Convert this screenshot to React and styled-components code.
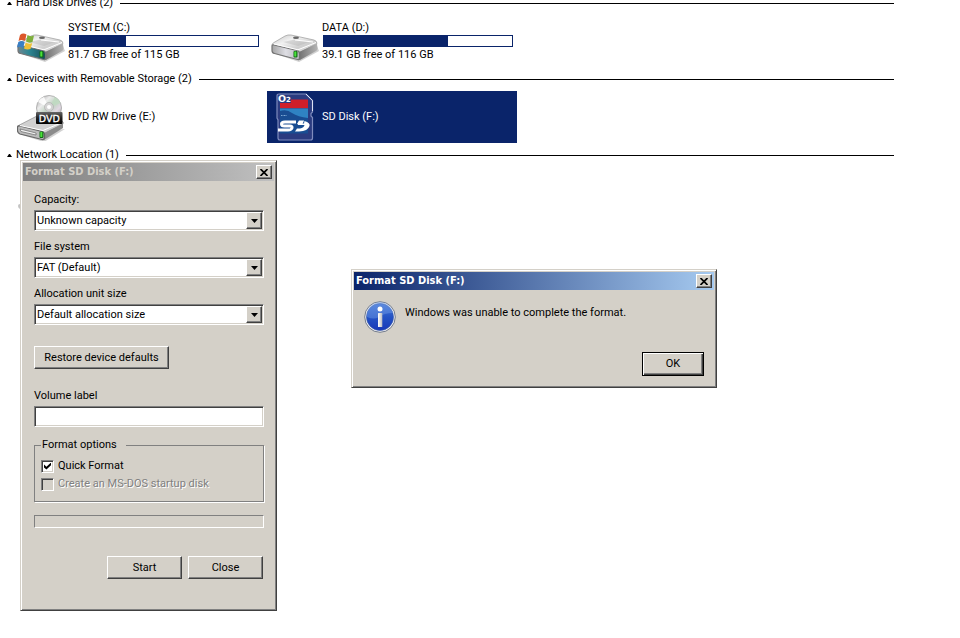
import { useState } from "react";
import styled, { createGlobalStyle, css } from "styled-components";

const GlobalStyle = createGlobalStyle`
  * {
    box-sizing: border-box;
  }

  body {
    margin: 0;
    background: #fff;
  }

  body,
  button,
  input,
  select {
    font-family: Roboto, Tahoma, sans-serif;
    font-size: 11px;
    line-height: 14px;
    color: #000;
  }
`;

const raised = css`
  border: 1px solid;
  border-color: #fff #404040 #404040 #fff;
  box-shadow: inset -1px -1px 0 #808080;
`;

const sunken = css`
  border: 1px solid;
  border-color: #808080 #fff #fff #808080;
  box-shadow:
    inset 1px 1px 0 #404040,
    inset -1px -1px 0 #d4d0c8;
`;

const Desktop = styled.div`
  position: relative;
  min-height: 100vh;
  overflow: hidden;
`;

const Explorer = styled.main`
  margin: -4px 66px 0 7px;
`;

const Section = styled.section`
  display: flex;
  flex-direction: column;
  gap: 5px;
  margin-bottom: 5px;
`;

const SectionHeader = styled.h2`
  display: flex;
  align-items: center;
  gap: 4px;
  margin: 0;
  font-size: 11px;
  font-weight: normal;
  line-height: 14px;
  white-space: nowrap;

  &::after {
    content: "";
    flex: 1;
    height: 1px;
    margin-left: 3px;
    background: #000;
  }
`;

const Items = styled.div`
  display: flex;
  gap: 4px;
  padding-left: 6px;
`;

const Item = styled.div`
  display: flex;
  align-items: center;
  gap: 3px;
  width: 250px;
  height: 52px;
  padding-left: 4px;
  color: ${(props) => (props.$selected ? "#fff" : "#000")};
  background: ${(props) => (props.$selected ? "#0a246a" : "transparent")};
`;

const Details = styled.div`
  display: flex;
  flex-direction: column;
  gap: 1px;
  line-height: 13px;
`;

const UsageBar = styled.div`
  width: 190px;
  height: 12px;
  margin-left: 1px;
  border: 1px solid #0a246a;
`;

const UsageFill = styled.div`
  height: 100%;
  background: #0a246a;
`;

const Window = styled.div`
  position: absolute;
  left: ${(props) => props.$left}px;
  top: ${(props) => props.$top}px;
  width: ${(props) => props.$width}px;
  padding: 2px;
  background: #d4d0c8;
  border: 1px solid;
  border-color: #d4d0c8 #404040 #404040 #d4d0c8;
  box-shadow:
    inset 1px 1px 0 #fff,
    inset -1px -1px 0 #808080;
`;

const TitleBar = styled.div`
  display: flex;
  align-items: center;
  justify-content: space-between;
  height: 18px;
  padding: 0 2px;
  font-family: "DejaVu Sans Condensed", "DejaVu Sans", Tahoma, sans-serif;
  font-weight: bold;
  color: ${(props) => (props.$active ? "#fff" : "#d4d0c8")};
  background: ${(props) =>
    props.$active
      ? "linear-gradient(to right, #0a246a, #a6caf0)"
      : "linear-gradient(to right, #808080, #c0c0c0)"};
`;

const CloseButton = styled.button`
  ${raised}
  display: flex;
  align-items: center;
  justify-content: center;
  width: 16px;
  height: 14px;
  padding: 0;
  background: #d4d0c8;
`;

const Button = styled.button`
  ${raised}
  min-width: 75px;
  height: 23px;
  padding: 0 8px;
  background: #d4d0c8;
`;

const WideButton = styled(Button)`
  width: 135px;
  margin-bottom: 20px;
`;

const DefaultButton = styled(Button)`
  min-width: 62px;
  height: 24px;
  border-color: #000;
  box-shadow:
    inset 1px 1px 0 #fff,
    inset -1px -1px 0 #404040,
    inset -2px -2px 0 #808080;
`;

const FormatForm = styled.form`
  display: flex;
  flex-direction: column;
  align-items: flex-start;
  padding: 12px 10px 29px 11px;
`;

const Field = styled.div`
  display: flex;
  flex-direction: column;
  gap: 3px;
  width: 100%;
  margin-bottom: ${(props) => props.$space}px;
`;

const SelectBox = styled.div`
  ${sunken}
  position: relative;
  height: 21px;
  padding: 1px;
  background: #fff;
`;

const Select = styled.select`
  appearance: none;
  display: block;
  width: 100%;
  height: 17px;
  padding: 0 18px 0 1px;
  border: 0;
  outline: 0;
  background: transparent;
`;

const SelectArrow = styled.span`
  ${raised}
  position: absolute;
  top: 1px;
  right: 1px;
  display: flex;
  align-items: center;
  justify-content: center;
  width: 16px;
  height: 17px;
  background: #d4d0c8;
  pointer-events: none;
`;

const TextInput = styled.input`
  ${sunken}
  width: 100%;
  height: 21px;
  padding: 2px 3px;
  outline: 0;
  background: #fff;
`;

const Options = styled.fieldset`
  display: flex;
  flex-direction: column;
  gap: 4px;
  width: 100%;
  margin: 0 0 13px;
  padding: 7px 6px 10px;
  border: 1px solid #808080;
  box-shadow: 1px 1px 0 #fff;
`;

const Legend = styled.legend`
  padding: 0 9px 0 1px;
`;

const CheckLabel = styled.label`
  display: flex;
  align-items: center;
  gap: 4px;
  color: ${(props) => (props.$disabled ? "#808080" : "#000")};
  text-shadow: ${(props) => (props.$disabled ? "1px 1px 0 #fff" : "none")};
`;

const CheckBox = styled.input`
  ${sunken}
  appearance: none;
  display: grid;
  place-items: center;
  width: 13px;
  height: 13px;
  margin: 0;
  background: #fff;

  &:disabled {
    background: #d4d0c8;
  }

  &:checked::after {
    content: "";
    width: 7px;
    height: 7px;
    background: #000;
    clip-path: polygon(0 30%, 35% 60%, 100% 0, 100% 40%, 35% 100%, 0 70%);
  }
`;

const Progress = styled.div`
  width: 100%;
  height: 13px;
  margin-bottom: 28px;
  border: 1px solid;
  border-color: #808080 #fff #fff #808080;
`;

const Actions = styled.div`
  display: flex;
  gap: 6px;
  align-self: flex-end;
  padding-right: 1px;
`;

const MessageBody = styled.div`
  display: flex;
  gap: 9px;
  padding: 11px 10px 0;
`;

const MessageText = styled.p`
  margin: 0;
  padding-top: 5px;
`;

const MessageActions = styled.div`
  display: flex;
  justify-content: flex-end;
  padding: 19px 10px 9px;
`;

function CloseIcon() {
  return (
    <svg width="8" height="7" viewBox="0 0 8 7" aria-hidden="true">
      <path d="M0.5 0 L7.5 7 M7.5 0 L0.5 7" stroke="#000" strokeWidth="1.7" />
    </svg>
  );
}

function HardDriveIcon({ system }) {
  return (
    <svg width="48" height="48" viewBox="0 0 48 48" aria-hidden="true">
      <defs>
        <linearGradient id="driveTop" x1="0" y1="0" x2="1" y2="1">
          <stop offset="0" stopColor="#c2c2c2" />
          <stop offset=".35" stopColor="#f2f2f2" />
          <stop offset=".65" stopColor="#cfcfcf" />
          <stop offset="1" stopColor="#e6e6e6" />
        </linearGradient>
        <linearGradient id="driveSide" x1="0" y1="0" x2="1" y2="0">
          <stop offset="0" stopColor="#6f6f6f" />
          <stop offset="1" stopColor="#b4b4b4" />
        </linearGradient>
        <linearGradient id="driveFront" x1="0" y1="0" x2="1" y2="0">
          <stop offset="0" stopColor="#a5a5a5" />
          <stop offset=".5" stopColor="#dedee4" />
          <stop offset="1" stopColor="#b9b9bd" />
        </linearGradient>
        <linearGradient id="driveTeal" x1="0" y1="0" x2="1" y2="0">
          <stop offset="0" stopColor="#6e8590" />
          <stop offset=".4" stopColor="#2d8793" />
          <stop offset="1" stopColor="#174b58" />
        </linearGradient>
      </defs>
      <path d="M2 36 L28 45 L48 34 L46 29 L28 39Z" fill="#666" opacity=".3" />
      <path
        d="M1 28 Q1 26.500 3 25.500 L14 19 Q17 17.500 20 18 L43 23 Q46 24 46 26.500 L29 35.500 L3 29.500Z"
        fill="url(#driveTop)"
        stroke="#9a9a9a"
        strokeWidth=".7"
      />
      <path
        d="M28 35 L46 26.500 L46.500 31.500 Q46.500 33 45 34 L29 43 L27.500 42.500Z"
        fill="url(#driveSide)"
      />
      <path
        d="M1 29 Q1 27.500 3 28 L26 33.500 Q28.500 34 28.500 37 L28.500 40.500 Q28.500 43 26.500 42.500 L3.500 36.500 Q1 36 1 33.500Z"
        fill={system ? "url(#driveTeal)" : "url(#driveFront)"}
        stroke="#747474"
        strokeWidth="1.200"
      />
      <path d="M3 27 L27 32.800 L45 25.500" fill="none" stroke="#fff" strokeWidth="1" />
      <path d="M12 25 L24 22.500 L38 25 L27 29Z" fill="#aaa" opacity=".35" />
      <path d="M24 23 L42 25" stroke="#fff" strokeWidth="1" />
      <ellipse cx="25" cy="20.800" rx="3" ry="1.200" fill="#686868" />
      <rect x="22.500" y="34" width="4" height="6.500" rx="1" fill="#126b16" />
      <rect x="23.300" y="34.500" width="2" height="5" rx=".5" fill="#4be339" />
      {system && (
        <g>
          <path d="M3 18 Q6 15.500 9.500 17.500 L8 24 Q5 22 1.500 24Z" fill="#dc572a" />
          <path d="M10.500 18 Q13.500 20 17 18.500 L15.500 25 Q12 26.500 9 24.500Z" fill="#7eaf3c" />
          <path d="M1.300 25 Q4.500 23 7.700 25 L6 31 Q3 29 0 30.500Z" fill="#397fc5" />
          <path d="M8.700 25.500 Q12 27.500 15.300 26 L13.500 32 Q10 33 7 31.500Z" fill="#efc038" />
        </g>
      )}
    </svg>
  );
}

function DvdDriveIcon() {
  return (
    <svg width="48" height="48" viewBox="0 0 48 48" aria-hidden="true">
      <defs>
        <linearGradient id="disc" x1="0" y1="0" x2="1" y2="1">
          <stop offset="0" stopColor="#9c9c9c" />
          <stop offset=".3" stopColor="#ececec" />
          <stop offset=".5" stopColor="#bdd1bf" />
          <stop offset=".7" stopColor="#e0d8e2" />
          <stop offset="1" stopColor="#989898" />
        </linearGradient>
        <linearGradient id="dvdLabel" x1="0" y1="0" x2="0" y2="1">
          <stop offset="0" stopColor="#666" />
          <stop offset=".5" stopColor="#222" />
          <stop offset="1" stopColor="#000" />
        </linearGradient>
      </defs>
      <path d="M2 41 L27 49 L48 36 L28 38Z" fill="#666" opacity=".3" />
      <path
        d="M0.500 33 L20 23 L45 28 Q47 29 46 31 L27 41 L3 36Z"
        fill="#d0d0d0"
        stroke="#949494"
        strokeWidth=".8"
      />
      <path d="M27 40 L46 30.500 L46 35 L27 47Z" fill="#8b8b8b" />
      <path
        d="M0.500 34 Q1 32.500 3 33 L25 38.500 Q27.500 39 27.500 41.500 L27.500 45 Q27 47 25 46.500 L3 41 Q.5 40 .5 37.500Z"
        fill="#bcbcbc"
        stroke="#666"
        strokeWidth="1.200"
      />
      <path d="M3 36 L19 40 L19 42 L4 38.500Z" fill="#f5f5f5" stroke="#555" strokeWidth=".6" />
      <path d="M3 32.500 L26 37.500 L45 29.500" fill="none" stroke="#fff" strokeWidth="1" />
      <rect x="22.500" y="38.500" width="4" height="6.500" rx="1" fill="#126b16" />
      <rect x="23.300" y="39" width="2" height="5" rx=".5" fill="#4be339" />
      <circle cx="32" cy="15" r="12.500" fill="url(#disc)" stroke="#a2a2a2" strokeWidth=".8" />
      <path d="M32 15 L21 9 Q23 5 27 4Z" fill="#fff" opacity=".85" />
      <path d="M32 15 L38 4 Q42 6 43.500 10Z" fill="#bfdac2" opacity=".85" />
      <circle cx="32" cy="14" r="4.500" fill="#d4d4d4" stroke="#aaa" strokeWidth=".6" />
      <circle cx="32" cy="14" r="2" fill="#fff" />
      <rect x="19" y="19" width="26.500" height="12" rx="1" fill="url(#dvdLabel)" />
      <text
        x="32.300"
        y="28.500"
        fontFamily="DejaVu Sans, sans-serif"
        fontSize="9.500"
        textAnchor="middle"
        fill="#fff"
        stroke="#fff"
        strokeWidth=".3"
      >
        DVD
      </text>
    </svg>
  );
}

function SdCardIcon() {
  return (
    <svg width="48" height="48" viewBox="0 0 48 48" aria-hidden="true">
      <path
        d="M8 1 H35 L41.500 7.500 V19 L40 20.500 V23 L41.500 24.500 V45 Q41.500 47 39.500 47 H9 Q7 47 7 45 V27 L6 25 V3 Q6 1 8 1Z"
        fill="#2b3b80"
        stroke="#7f8bbd"
        strokeWidth="1.200"
      />
      <path d="M35 1 L41.500 7.500 V18" fill="none" stroke="#dce2f4" strokeWidth="1" />
      <rect x="9" y="6.500" width="28" height="9" fill="#cf1f2a" />
      <rect x="9" y="15.500" width="28" height="25" fill="#194d92" />
      <path d="M9 15.500 H37 V25 Q27 24 21 20 Q16 16 9 18Z" fill="#2f83c3" />
      <rect x="7" y="2" width="13" height="8" fill="#2b3b80" />
      <text
        x="7"
        y="9"
        fontFamily="DejaVu Sans, sans-serif"
        fontSize="9.500"
        fontWeight="bold"
        fill="#fff"
      >
        O
        <tspan fontSize="7">2</tspan>
      </text>
      <path d="M10 22.500 H16" stroke="#7ca8d4" strokeWidth="1" strokeDasharray="1 .5" />
      <path
        d="M25 29 H14 Q10.500 29 10.500 31 Q10.500 33 13.500 33 H19 Q21.500 33 21 35 Q20.500 37 17 37 H7"
        fill="none"
        stroke="#fff"
        strokeWidth="3"
      />
      <path d="M26 31 L28 27.500 H33 L31.500 31Z" fill="#fff" />
      <path
        d="M33.500 28 Q39.500 30 38.500 33 Q37 38 28 38.500 H24 L26 35.500 H29 Q33 34.500 33.500 32 H26.500 L27.500 30.500 H33Z"
        fill="#fff"
      />
    </svg>
  );
}

function NetworkDriveIcon() {
  return (
    <svg width="48" height="48" viewBox="0 0 48 48" aria-hidden="true">
      <path d="M1 37 Q1 35 3 35 H44 V40 H3 Q1 39 1 37Z" fill="#c4c4c4" />
    </svg>
  );
}

function InfoIcon() {
  return (
    <svg width="32" height="32" viewBox="0 0 32 32" aria-hidden="true">
      <defs>
        <linearGradient id="infoBlue" x1="0" y1="0" x2="0" y2="1">
          <stop offset="0" stopColor="#4878d6" />
          <stop offset=".5" stopColor="#2453c5" />
          <stop offset="1" stopColor="#1838b8" />
        </linearGradient>
        <linearGradient id="infoStem" x1="0" y1="0" x2="1" y2="0">
          <stop offset="0" stopColor="#fff" />
          <stop offset="1" stopColor="#bcbcc0" />
        </linearGradient>
      </defs>
      <circle cx="16" cy="16" r="15.300" fill="#f0f1f4" stroke="#737b8b" strokeWidth="1" />
      <circle cx="16" cy="16" r="13.500" fill="url(#infoBlue)" stroke="#3456a5" strokeWidth=".6" />
      <path d="M3 16 A13 13 0 0 1 29 12 Q20 12 15 16 Q10 19 3 16Z" fill="#7ba4ec" opacity=".4" />
      <circle cx="16" cy="8" r="2.500" fill="#fff" />
      <rect x="14" y="12" width="4.300" height="14" rx=".6" fill="url(#infoStem)" />
    </svg>
  );
}

function ItemSection({ title, children }) {
  return (
    <Section>
      <SectionHeader>
        <svg width="5" height="3" viewBox="0 0 5 3" aria-hidden="true">
          <path d="M0 3 L2 0 H3 L5 3Z" fill="#000" />
        </svg>
        {title}
      </SectionHeader>
      <Items>{children}</Items>
    </Section>
  );
}

function HardDrive({ name, free, used, system }) {
  return (
    <Item>
      <HardDriveIcon system={system} />
      <Details>
        <span>{name}</span>
        <UsageBar>
          <UsageFill style={{ width: `${used}%` }} />
        </UsageBar>
        <span>{free}</span>
      </Details>
    </Item>
  );
}

function SelectField({ id, label, option, space }) {
  return (
    <Field $space={space}>
      <label htmlFor={id}>{label}</label>
      <SelectBox>
        <Select id={id}>
          <option>{option}</option>
        </Select>
        <SelectArrow>
          <svg width="7" height="4" viewBox="0 0 7 4" aria-hidden="true">
            <path d="M0 0 H7 L3.500 4Z" fill="#000" />
          </svg>
        </SelectArrow>
      </SelectBox>
    </Field>
  );
}

function FormatDialog() {
  const [quick, setQuick] = useState(true);
  const [volume, setVolume] = useState("");

  return (
    <Window role="dialog" aria-label="Format" $left={20} $top={160} $width={257}>
      <TitleBar>
        Format SD Disk (F:)
        <CloseButton aria-label="Close">
          <CloseIcon />
        </CloseButton>
      </TitleBar>
      <FormatForm onSubmit={(e) => e.preventDefault()}>
        <SelectField id="capacity" label="Capacity:" option="Unknown capacity" space={9} />
        <SelectField id="filesystem" label="File system" option="FAT (Default)" space={9} />
        <SelectField
          id="allocation"
          label="Allocation unit size"
          option="Default allocation size"
          space={21}
        />
        <WideButton type="button">Restore device defaults</WideButton>
        <Field $space={11}>
          <label htmlFor="volume">Volume label</label>
          <TextInput
            id="volume"
            value={volume}
            onChange={(e) => setVolume(e.target.value)}
          />
        </Field>
        <Options>
          <Legend>Format options</Legend>
          <CheckLabel>
            <CheckBox
              type="checkbox"
              checked={quick}
              onChange={(e) => setQuick(e.target.checked)}
            />
            Quick Format
          </CheckLabel>
          <CheckLabel $disabled>
            <CheckBox type="checkbox" disabled />
            Create an MS-DOS startup disk
          </CheckLabel>
        </Options>
        <Progress role="progressbar" aria-label="Format progress" />
        <Actions>
          <Button type="submit">Start</Button>
          <Button type="button">Close</Button>
        </Actions>
      </FormatForm>
    </Window>
  );
}

function MessageDialog() {
  return (
    <Window role="alertdialog" aria-label="Message" $left={351} $top={269} $width={366}>
      <TitleBar $active>
        Format SD Disk (F:)
        <CloseButton aria-label="Close">
          <CloseIcon />
        </CloseButton>
      </TitleBar>
      <MessageBody>
        <InfoIcon />
        <MessageText>Windows was unable to complete the format.</MessageText>
      </MessageBody>
      <MessageActions>
        <DefaultButton>OK</DefaultButton>
      </MessageActions>
    </Window>
  );
}

function App() {
  return (
    <Desktop>
      <GlobalStyle />
      <Explorer>
        <ItemSection title="Hard Disk Drives (2)">
          <HardDrive name="SYSTEM (C:)" free="81.7 GB free of 115 GB" used={30} system />
          <HardDrive name="DATA (D:)" free="39.1 GB free of 116 GB" used={66} />
        </ItemSection>
        <ItemSection title="Devices with Removable Storage (2)">
          <Item>
            <DvdDriveIcon />
            DVD RW Drive (E:)
          </Item>
          <Item $selected>
            <SdCardIcon />
            SD Disk (F:)
          </Item>
        </ItemSection>
        <ItemSection title="Network Location (1)">
          <Item>
            <NetworkDriveIcon />
          </Item>
        </ItemSection>
      </Explorer>
      <FormatDialog />
      <MessageDialog />
    </Desktop>
  );
}

export default App;
